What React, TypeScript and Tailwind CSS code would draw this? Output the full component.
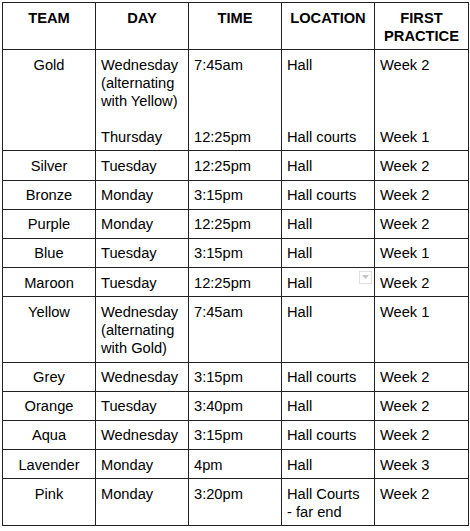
type Row = {
  team: string
  day: string[]
  time: string[]
  location: string[]
  first: string[]
  dropdown?: boolean
}

// blank strings keep the empty paragraph lines of the doc
const rows: Row[] = [
  {
    team: 'Gold',
    day: ['Wednesday', '(alternating', 'with Yellow)', '', 'Thursday'],
    time: ['7:45am', '', '', '', '12:25pm'],
    location: ['Hall', '', '', '', 'Hall courts'],
    first: ['Week 2', '', '', '', 'Week 1'],
  },
  { team: 'Silver', day: ['Tuesday'], time: ['12:25pm'], location: ['Hall'], first: ['Week 2'] },
  { team: 'Bronze', day: ['Monday'], time: ['3:15pm'], location: ['Hall courts'], first: ['Week 2'] },
  { team: 'Purple', day: ['Monday'], time: ['12:25pm'], location: ['Hall'], first: ['Week 2'] },
  { team: 'Blue', day: ['Tuesday'], time: ['3:15pm'], location: ['Hall'], first: ['Week 1'] },
  { team: 'Maroon', day: ['Tuesday'], time: ['12:25pm'], location: ['Hall'], first: ['Week 2'], dropdown: true },
  {
    team: 'Yellow',
    day: ['Wednesday', '(alternating', 'with Gold)'],
    time: ['7:45am'],
    location: ['Hall'],
    first: ['Week 1'],
  },
  { team: 'Grey', day: ['Wednesday'], time: ['3:15pm'], location: ['Hall courts'], first: ['Week 2'] },
  { team: 'Orange', day: ['Tuesday'], time: ['3:40pm'], location: ['Hall'], first: ['Week 2'] },
  { team: 'Aqua', day: ['Wednesday'], time: ['3:15pm'], location: ['Hall courts'], first: ['Week 2'] },
  { team: 'Lavender', day: ['Monday'], time: ['4pm'], location: ['Hall'], first: ['Week 3'] },
  { team: 'Pink', day: ['Monday'], time: ['3:20pm'], location: ['Hall Courts', '- far end'], first: ['Week 2'] },
]

function Lines({ lines }: { lines: string[] }) {
  return (
    <>
      {lines.map((l, i) => (
        <div key={i} className="h-[18px] whitespace-nowrap">
          {l}
        </div>
      ))}
    </>
  )
}

const cell = 'border border-[#222] px-[5px] pt-[5.5px] pb-[4.7px] align-top'

export default function App() {
  return (
    <div className="min-h-screen bg-white pl-[2px] pt-[2px] font-['Liberation_Sans',Arial,sans-serif] text-[14.67px] leading-[18px] text-black">
      <table className="w-[466px] table-fixed border-collapse">
        <colgroup>
          <col className="w-[93px]" />
          <col className="w-[93px]" />
          <col className="w-[93px]" />
          <col className="w-[93px]" />
          <col className="w-[94px]" />
        </colgroup>
        <thead>
          <tr className="font-bold">
            <th className={`${cell} text-center`}>TEAM</th>
            <th className={`${cell} text-center`}>DAY</th>
            <th className={`${cell} text-center`}>TIME</th>
            <th className={`${cell} text-center`}>LOCATION</th>
            <th className={`${cell} text-center`}>
              <div>FIRST</div>
              <div>PRACTICE</div>
            </th>
          </tr>
        </thead>
        <tbody>
          {rows.map((r) => (
            <tr key={r.team}>
              <td className={`${cell} text-center`}>
                <Lines lines={[r.team]} />
              </td>
              <td className={cell}>
                <Lines lines={r.day} />
              </td>
              <td className={cell}>
                <Lines lines={r.time} />
              </td>
              <td className={`${cell} relative`}>
                <Lines lines={r.location} />
                {r.dropdown && (
                  <div className="absolute right-[2px] top-[3px] flex h-[13px] w-[13px] items-start justify-center border border-[#e0e0e0] bg-white pt-[3px]">
                    <svg width="7" height="4" viewBox="0 0 7 4">
                      <path d="M0 0h7L3.5 4z" fill="#c4c4c4" />
                    </svg>
                  </div>
                )}
              </td>
              <td className={cell}>
                <Lines lines={r.first} />
              </td>
            </tr>
          ))}
        </tbody>
      </table>
    </div>
  )
}
